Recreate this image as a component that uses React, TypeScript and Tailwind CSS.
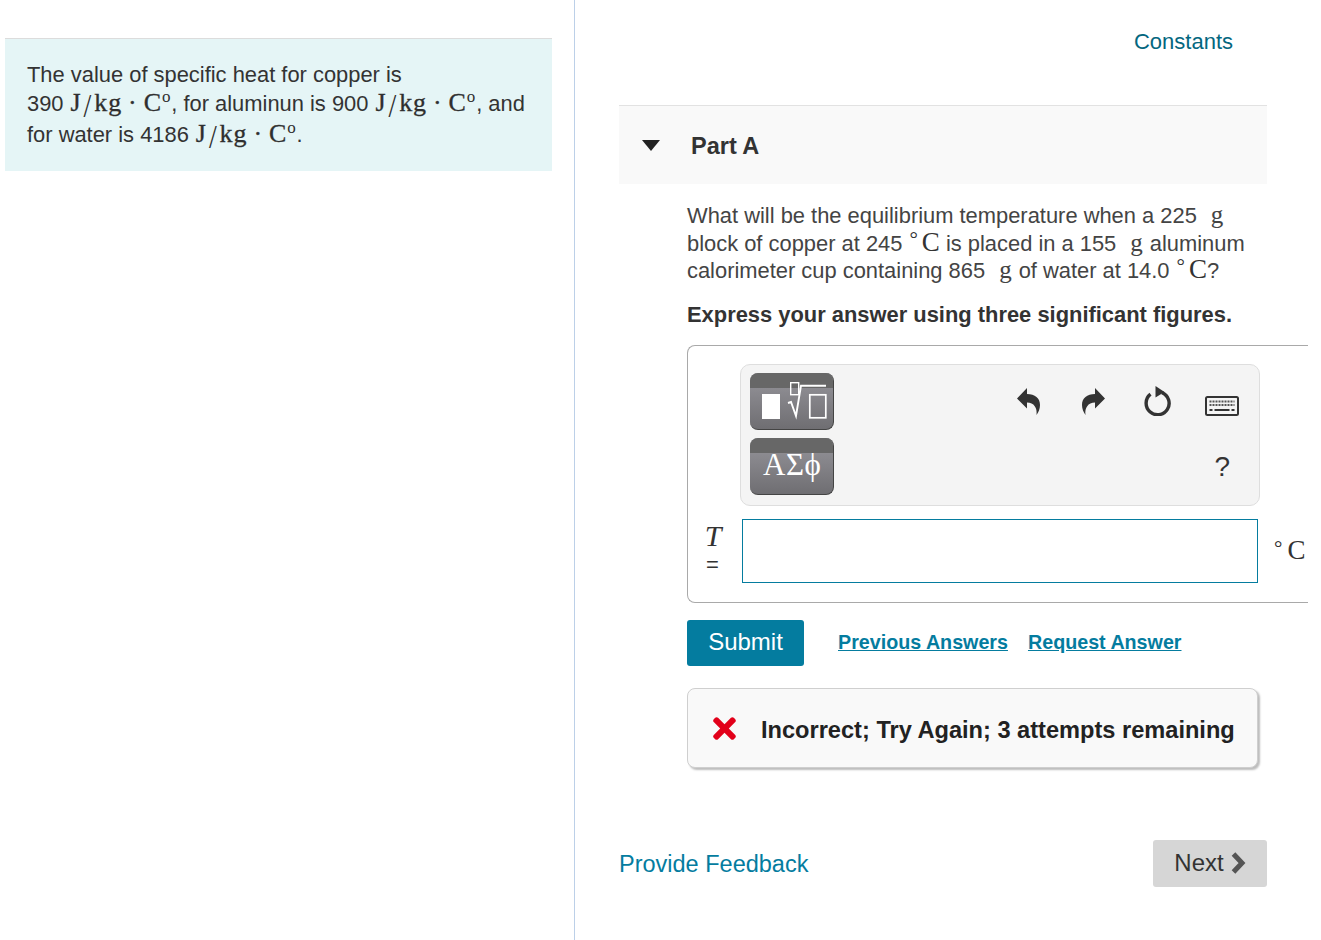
import { FaTimes } from "react-icons/fa";

const SANS = "font-['Liberation_Sans',Arial,sans-serif]";
const MATH = "font-['Liberation_Serif','Times_New_Roman',serif]";

function Unit() {
  return (
    <span className={`${MATH} text-[26px] tracking-[0.9px] text-[#2f2f2f] ml-[7px] [-webkit-text-stroke:0.3px_#2f2f2f]`}>
      J
      <span className="inline-block h-[20px] leading-[20px] text-[28px] font-normal mx-[2px] scale-y-[1.2] translate-y-[4px] [-webkit-text-stroke:0px]">/</span>
      kg
      <span className="mx-[6px]">·</span>C
      <span className="text-[17px] leading-[0] align-[9px] [-webkit-text-stroke:0px]">o</span>
    </span>
  );
}

function Deg() {
  return (
    <span className={`${MATH} text-[27px] leading-[0] text-[#333]`}>
      <span className="text-[21px] leading-[0] align-[5px] ml-[7px] mr-[4px]">°</span>C
    </span>
  );
}

function G() {
  return <span className={`${MATH} text-[25px] leading-[0] mr-[7px] ml-[14px]`}>g</span>;
}

function BackArrow({ className }: { className?: string }) {
  return (
    <svg className={className} width="23" height="27" viewBox="0 0 23 27">
      <path d="M0 10.5 10 0V6C18 6 23 10 23 17C23 21 21.5 24 19.5 27C20.5 20 17 14.5 10 14.5V20.5Z" fill="#333" />
    </svg>
  );
}

function KeyboardIcon() {
  return (
    <svg width="34" height="20" viewBox="0 0 34 20">
      <rect x="1" y="1" width="32" height="18" rx="1.5" fill="#f4f4f4" stroke="#333" strokeWidth="2" />
      <path d="M4.5 5.5h25M4.5 9h25" stroke="#555" strokeWidth="2" strokeDasharray="2 1" />
      <path d="M4.5 14h3M26.5 14h3M9.5 14h15" stroke="#333" strokeWidth="2" />
    </svg>
  );
}

function ResetIcon() {
  return (
    <svg width="27" height="30" viewBox="0 0 27 30">
      <path d="M6.5 8.2A11.5 11.5 0 1 0 18 6.6" fill="none" stroke="#333" strokeWidth="3.4" />
      <path d="M11.5 0 20.5 6 11.5 11.5Z" fill="#333" />
    </svg>
  );
}

function TemplateButton({ children }: { children: React.ReactNode }) {
  return (
    <div className="relative w-[84px] h-[57px] rounded-[8px] overflow-hidden border-b border-r border-[#444] flex flex-col bg-gradient-to-b from-[#97969c] to-[#6f6e72]">
      <div className="h-[15px] bg-[#676767] shrink-0" />
      {children}
    </div>
  );
}

export default function App() {
  return (
    <div className={`${SANS} flex w-[1321px] h-[940px] bg-white overflow-hidden text-[#333]`}>
      {/* Left - intro */}
      <div className="w-[575px] shrink-0 border-r border-[#bcd0e8] pt-[38px] pl-[5px]">
        <div className="w-[547px] h-[133px] bg-[#e5f5f6] border-t border-[#dcdcdc] pl-[22px] pt-[21px] text-[21.9px] text-[#333]">
          <div className="h-[29px] leading-[29px]">The value of specific heat for copper is</div>
          <div className="h-[28px] leading-[28px] whitespace-nowrap">
            390
            <Unit />, for aluminun is 900
            <Unit />, and
          </div>
          <div className="h-[34px] leading-[34px] whitespace-nowrap">
            for water is 4186
            <Unit />.
          </div>
        </div>
      </div>

      {/* Right - question */}
      <div className="flex-1 pl-[44px]">
        <div className="w-[648px] h-[105px] pt-[27px] pr-[34px] text-right text-[22px] leading-[30px] text-[#04677f]">
          Constants
        </div>

        <div className="w-[648px] h-[79px] bg-[#f9f9f9] border-t border-[#e2e2e2] flex items-center">
          <svg className="ml-[23px] mr-[31px]" width="18" height="11" viewBox="0 0 18 11">
            <path d="M0 0H18L9 11Z" fill="#222" />
          </svg>
          <span className="text-[23.5px] font-bold text-[#333] pt-[3px]">Part A</span>
        </div>

        <div className="pl-[68px]">
          <div className="pt-[18px] text-[21.9px] text-[#444] whitespace-nowrap">
            <div className="h-[28px] leading-[28px]">
              What will be the equilibrium temperature when a 225
              <G />
            </div>
            <div className="h-[27px] leading-[27px]">
              block of copper at 245
              <Deg /> is placed in a 155
              <G />aluminum
            </div>
            <div className="h-[27px] leading-[27px]">
              calorimeter cup containing 865
              <G />of water at 14.0
              <Deg />?
            </div>
          </div>

          <div className="mt-[17px] h-[28px] leading-[28px] text-[21.9px] font-bold text-[#333]">
            Express your answer using three significant figures.
          </div>

          {/* Answer box */}
          <div className="mt-[16px] w-[621px] h-[258px] border border-r-0 border-[#a9a9a9] rounded-l-[8px] pl-[52px] pt-[18px]">
            <div className="w-[520px] h-[142px] bg-[#f4f4f4] border border-[#dedede] rounded-[10px] flex">
              <div className="pl-[9px] pt-[8px] flex flex-col gap-[8px]">
                <TemplateButton>
                  <svg className="absolute left-0 top-0" width="84" height="57" viewBox="0 0 84 57">
                    <rect x="12" y="21" width="18" height="25" fill="#fff" />
                    <rect x="40.7" y="9.7" width="8" height="12" fill="none" stroke="#fff" strokeWidth="1.4" />
                    <path d="M38 30l3-1 5 14 5-30.3h25" fill="none" stroke="#fff" strokeWidth="1.9" />
                    <rect x="59.8" y="21.8" width="16" height="23" fill="none" stroke="#fff" strokeWidth="1.7" />
                  </svg>
                </TemplateButton>
                <TemplateButton>
                  <span className={`${MATH} absolute left-[13px] top-[12px] text-[31px] leading-[30px] tracking-[0.5px] text-white whitespace-nowrap`}>
                    ΑΣϕ
                  </span>
                </TemplateButton>
              </div>
              <div className="flex-1 flex flex-col items-end pr-[20px] pt-[23px]">
                <div className="flex items-start h-[30px]">
                  <BackArrow className="mr-[42px]" />
                  <BackArrow className="mr-[39px] -scale-x-100" />
                  <span className="mr-[34px] -mt-[2px]">
                    <ResetIcon />
                  </span>
                  <span className="mt-[8px]">
                    <KeyboardIcon />
                  </span>
                </div>
                <div className="mt-[33px] mr-[9px] text-[28px] leading-[32px] text-[#333]">?</div>
              </div>
            </div>

            <div className="mt-[13px] flex -ml-[35px]">
              <div className="w-[21px] mr-[16px] flex flex-col items-center pt-[2px] -translate-x-[3px]">
                <span className={`${MATH} italic text-[30px] leading-[30px] text-[#333] ml-[1px]`}>T</span>
                <span className="text-[22px] leading-[24px] text-[#333] mt-[2px]">=</span>
              </div>
              <input
                type="text"
                aria-label="T"
                className="w-[516px] h-[64px] border border-[#047c9f] bg-white outline-none"
              />
              <span className={`${MATH} ml-[16px] mt-[13px] text-[27px] leading-[36px] text-[#333] whitespace-nowrap`}>
                <span className="text-[21px] leading-[0] align-[4px] mr-[5px]">°</span>C
              </span>
            </div>
          </div>

          {/* Actions */}
          <div className="mt-[17px] flex items-center h-[46px]">
            <button className="w-[117px] h-[46px] rounded-[3px] bg-[#047c9f] text-white text-[24px] pb-[2px]">Submit</button>
            <a href="#previous" className="ml-[34px] pb-[1px] text-[19.7px] font-bold underline text-[#047c9f]">
              Previous Answers
            </a>
            <a href="#request" className="ml-[20px] pb-[1px] text-[19.7px] font-bold underline text-[#047c9f]">
              Request Answer
            </a>
          </div>

          {/* Feedback */}
          <div className="mt-[22px] w-[571px] h-[80px] rounded-[8px] border border-[#cfcfcf] bg-[#f9f9f9] shadow-[2px_2px_2px_#bdbdbd] flex items-center pl-[22px]">
            <FaTimes className="w-[29px] h-[33px] text-[#e2001a]" />
            <span className="ml-[22px] pt-[5px] text-[23.6px] font-bold text-[#222] whitespace-nowrap">
              Incorrect; Try Again; 3 attempts remaining
            </span>
          </div>
        </div>

        {/* Footer */}
        <div className="mt-[72px] w-[648px] flex items-center justify-between">
          <a href="#feedback" className="text-[23.5px] leading-[34px] text-[#047c9f] mt-[1px]">
            Provide Feedback
          </a>
          <button className="w-[114px] h-[47px] rounded-[3px] bg-[#d6d6d6] flex items-center justify-center gap-[7px] text-[24px] text-[#333]">
            <span className="pb-[2px]">Next</span>
            <svg width="15" height="22" viewBox="0 0 15 22" className="-mt-[2px]">
              <path d="M2.5 2 11 11 2.5 20" fill="none" stroke="#555" strokeWidth="5" />
            </svg>
          </button>
        </div>
      </div>
    </div>
  );
}
